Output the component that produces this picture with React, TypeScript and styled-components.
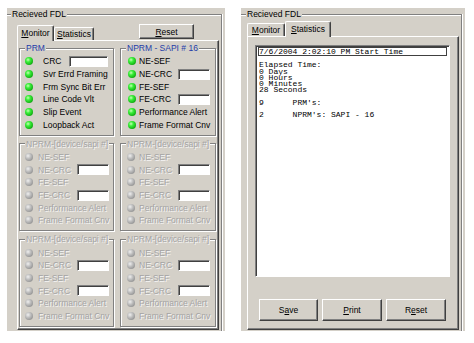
import React from 'react';
import styled, { createGlobalStyle } from 'styled-components';

const FACE = '#d4d0c8';
const SHADOW = '#808080';
const DARK = '#404040';

const GlobalStyle = createGlobalStyle`
  body {
    margin: 0;
    background: #fff;
    font-family: "Liberation Sans", Arial, sans-serif;
    font-size: 8.5px;
    color: #000;
  }
`;

const Screen = styled.div`
  display: flex;
  align-items: flex-start;
  gap: 16px;
  padding: 8px 0 0 7px;
`;

const Window = styled.div<{ $w: number }>`
  width: ${p => p.$w}px;
  height: 323px;
  box-sizing: border-box;
  padding-top: 1px;
  background: ${FACE};
  overflow: hidden;
`;

const Frame = styled.fieldset<{ $pad: number }>`
  margin: 0 3px 0 0;
  padding: 0 2px 0 ${p => p.$pad}px;
  min-width: 0;
  height: 400px;
  border: 1px solid ${SHADOW};
  border-left: none;
  border-bottom: none;
  box-shadow: inset 0 1px 0 #fff, 1px 0 0 #fff;
`;

const FrameTitle = styled.legend`
  padding: 0 1px;
  line-height: 10px;
  background: ${FACE};
`;

const TabControl = styled.div<{ $x: number }>`
  margin-left: ${p => p.$x}px;
`;

const TabBar = styled.div<{ $top: number }>`
  display: flex;
  align-items: flex-end;
  height: 16px;
  margin-top: ${p => p.$top}px;
`;

const Tab = styled.div<{ $active?: boolean; $w: number }>`
  position: relative;
  z-index: ${p => (p.$active ? 1 : 0)};
  display: flex;
  align-items: center;
  justify-content: center;
  box-sizing: border-box;
  width: ${p => p.$w}px;
  height: ${p => (p.$active ? 16 : 13)}px;
  margin-bottom: ${p => (p.$active ? -1 : 0)}px;
  padding-bottom: ${p => (p.$active ? 2 : 0)}px;
  background: ${FACE};
  border: 1px solid;
  border-color: #fff ${DARK} transparent #fff;
  border-bottom: none;
  border-radius: 2px 2px 0 0;
  box-shadow: inset -1px 0 0 ${SHADOW};
`;

const TabPage = styled.div<{ $w: number; $h: number; $pad: string }>`
  width: ${p => p.$w}px;
  height: ${p => p.$h}px;
  box-sizing: border-box;
  padding: ${p => p.$pad};
  background: ${FACE};
  border: 1px solid;
  border-color: #fff ${DARK} ${DARK} #fff;
  box-shadow: inset -1px -1px 0 ${SHADOW};
`;

const PushButton = styled.button<{ $w: number; $h: number }>`
  display: flex;
  align-items: center;
  justify-content: center;
  box-sizing: border-box;
  width: ${p => p.$w}px;
  height: ${p => p.$h}px;
  padding: 0;
  font: inherit;
  color: #000;
  background: ${FACE};
  border: 1px solid;
  border-color: #fff ${DARK} ${DARK} #fff;
  box-shadow: inset -1px -1px 0 ${SHADOW};
`;

const HeaderButton = styled(PushButton)`
  align-self: flex-start;
  margin-left: 45px;
`;

const GroupGrid = styled.div`
  display: grid;
  grid-template-columns: 95px 96px;
  column-gap: 6px;
  row-gap: 3px;
`;

const Group = styled.fieldset`
  margin: 0;
  padding: 0;
  min-width: 0;
  border: 1px solid ${SHADOW};
  box-shadow: inset 1px 1px 0 #fff, 1px 1px 0 #fff;
`;

const GroupTitle = styled.legend<{ $disabled?: boolean }>`
  margin-left: 5px;
  padding: 0 1px;
  line-height: 10px;
  background: ${FACE};
  color: ${p => (p.$disabled ? '#a4a4a4' : '#1e3ca8')};
  text-shadow: ${p => (p.$disabled ? '1px 1px 0 #f4f4f4' : 'none')};
`;

const Rows = styled.div`
  display: grid;
  grid-auto-rows: 12.7px;
  padding: 2px 5px 3.5px 0;
`;

const Row = styled.div<{ $indent: number }>`
  display: flex;
  align-items: center;
  padding-left: ${p => p.$indent}px;
`;

const Led = styled.span<{ $on?: boolean; $gap: number }>`
  flex: none;
  width: 8px;
  height: 8px;
  margin-right: ${p => p.$gap}px;
  border-radius: 50%;
  background: ${p =>
    p.$on
      ? 'radial-gradient(circle at 38% 35%, #c8ffb4 0, #3cf03c 30%, #14b414 70%, #0c6a0c 100%)'
      : 'radial-gradient(circle at 38% 35%, #efefef 0, #bcbcbc 40%, #8c8c8c 85%, #707070 100%)'};
`;

const Label = styled.span<{ $disabled?: boolean }>`
  flex: 1;
  white-space: nowrap;
  color: ${p => (p.$disabled ? '#a4a4a4' : '#000')};
  text-shadow: ${p => (p.$disabled ? '1px 1px 0 #f4f4f4' : 'none')};
`;

const Field = styled.div<{ $w: number }>`
  flex: none;
  width: ${p => p.$w}px;
  height: 11px;
  box-sizing: border-box;
  background: #fff;
  border: 1px solid;
  border-color: ${SHADOW} #fff #fff ${SHADOW};
  box-shadow: inset 1px 1px 0 ${DARK};
`;

const ListBox = styled.div`
  width: 195px;
  height: 232px;
  box-sizing: border-box;
  padding: 1px 2px;
  background: #fff;
  border: 1px solid;
  border-color: ${SHADOW} #fff #fff ${SHADOW};
  box-shadow: inset 1px 1px 0 ${DARK};
  font-family: "Liberation Mono", "Courier New", monospace;
  font-size: 8px;
`;

const LogLine = styled.div<{ $focused?: boolean }>`
  height: ${p => (p.$focused ? 9 : 6.25)}px;
  line-height: ${p => (p.$focused ? 7 : 6.25)}px;
  box-sizing: border-box;
  white-space: pre;
  border: ${p => (p.$focused ? `1px solid ${DARK}` : 'none')};
  padding-left: ${p => (p.$focused ? 0 : 1)}px;
`;

const ButtonRow = styled.div`
  display: flex;
  gap: 4px;
  margin: 22px 0 0 4px;
`;

type LedRow = { label: string; field?: number };
type GroupData = { title: string; indent: number; gap: number; disabled?: boolean; rows: LedRow[] };

const nprmRows = (w: number): LedRow[] => [
  { label: 'NE-SEF' },
  { label: 'NE-CRC', field: w },
  { label: 'FE-SEF' },
  { label: 'FE-CRC', field: w },
  { label: 'Performance Alert' },
  { label: 'Frame Format Cnv' },
];

const groups: GroupData[] = [
  {
    title: 'PRM',
    indent: 5,
    gap: 10,
    rows: [
      { label: 'CRC', field: 39 },
      { label: 'Svr Errd Framing' },
      { label: 'Frm Sync Bit Err' },
      { label: 'Line Code Vlt' },
      { label: 'Slip Event' },
      { label: 'Loopback Act' },
    ],
  },
  { title: 'NPRM - SAPI # 16', indent: 7, gap: 3, rows: nprmRows(32) },
  { title: 'NPRM-[device/sapi #]', indent: 5, gap: 5, disabled: true, rows: nprmRows(32) },
  { title: 'NPRM-[device/sapi #]', indent: 6, gap: 4, disabled: true, rows: nprmRows(32) },
  { title: 'NPRM-[device/sapi #]', indent: 5, gap: 5, disabled: true, rows: nprmRows(32) },
  { title: 'NPRM-[device/sapi #]', indent: 6, gap: 4, disabled: true, rows: nprmRows(32) },
];

const log = [
  '',
  'Elapsed Time:',
  '0 Days',
  '0 Hours',
  '0 Minutes',
  '28 Seconds',
  '',
  "9      PRM's:",
  '',
  "2      NPRM's: SAPI - 16",
];

function MonitorPanel() {
  return (
    <Window $w={218}>
      <Frame $pad={4}>
        <FrameTitle>Recieved FDL</FrameTitle>
        <TabControl $x={6}>
          <TabBar $top={5}>
            <Tab $active $w={37}><span><u>M</u>onitor</span></Tab>
            <Tab $w={40}><span><u>S</u>tatistics</span></Tab>
            <HeaderButton $w={55} $h={15}><span><u>R</u>eset</span></HeaderButton>
          </TabBar>
          <TabPage $w={202} $h={290} $pad="2px 2px 0 1px">
            <GroupGrid>
              {groups.map((g, i) => (
                <Group key={i}>
                  <GroupTitle $disabled={g.disabled}>{g.title}</GroupTitle>
                  <Rows>
                    {g.rows.map(r => (
                      <Row key={r.label} $indent={g.indent}>
                        <Led $on={!g.disabled} $gap={g.gap} />
                        <Label $disabled={g.disabled}>{r.label}</Label>
                        {r.field && <Field $w={r.field} />}
                      </Row>
                    ))}
                  </Rows>
                </Group>
              ))}
            </GroupGrid>
          </TabPage>
        </TabControl>
      </Frame>
    </Window>
  );
}

function StatisticsPanel() {
  return (
    <Window $w={224}>
      <Frame $pad={5}>
        <FrameTitle>Recieved FDL</FrameTitle>
        <TabControl $x={1}>
          <TabBar $top={1}>
            <Tab $w={38}><span><u>M</u>onitor</span></Tab>
            <Tab $active $w={46}><span><u>S</u>tatistics</span></Tab>
          </TabBar>
          <TabPage $w={212} $h={294} $pad="8px 0 0 7px">
            <ListBox>
              <LogLine $focused>7/6/2004 2:02:10 PM Start Time</LogLine>
              {log.map((line, i) => (
                <LogLine key={i}>{line}</LogLine>
              ))}
            </ListBox>
            <ButtonRow>
              <PushButton $w={59} $h={22}><span>S<u>a</u>ve</span></PushButton>
              <PushButton $w={60} $h={22}><span><u>P</u>rint</span></PushButton>
              <PushButton $w={60} $h={22}><span>R<u>e</u>set</span></PushButton>
            </ButtonRow>
          </TabPage>
        </TabControl>
      </Frame>
    </Window>
  );
}

export default function App() {
  return (
    <>
      <GlobalStyle />
      <Screen>
        <MonitorPanel />
        <StatisticsPanel />
      </Screen>
    </>
  );
}
